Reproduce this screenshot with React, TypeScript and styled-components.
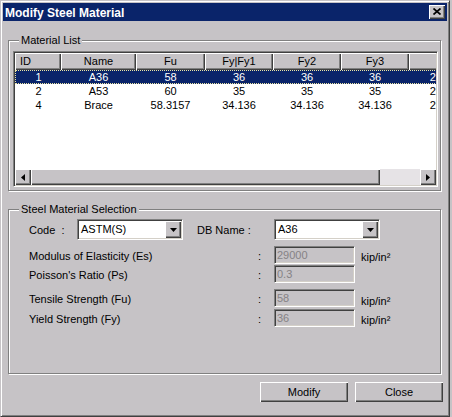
import React from 'react';
import styled, { createGlobalStyle } from 'styled-components';

const BG = '#c6c3c6';
const NAVY = '#0a246a';
const FONT = '"Liberation Sans", Arial, sans-serif';

const GlobalStyle = createGlobalStyle`
  html, body { margin: 0; padding: 0; background: ${BG}; }
  body { font-family: ${FONT}; font-size: 11px; color: #000; }
  * { box-sizing: border-box; }
`;

const Window = styled.div`
  width: 450px;
  height: 417px;
  background: ${BG};
  border: 1px solid;
  border-color: ${BG} #404040 #404040 ${BG};
  box-shadow: inset 1px 1px #fff, inset -1px -1px #808080;
  padding: 2px;
  display: flex;
  flex-direction: column;
`;

const TitleBar = styled.div`
  height: 18px;
  background: ${NAVY};
  color: #fff;
  display: flex;
  align-items: center;
  justify-content: space-between;
  padding: 0 2px 0 2px;
  font-weight: bold;
  font-size: 12px;
`;

const TitleText = styled.span`
  line-height: 18px;
  padding-top: 1px;
`;

const raised = `
  background: ${BG};
  box-shadow: inset 1px 1px #fff, inset -1px -1px #404040, inset -2px -2px #808080;
`;

const sunkenBorder = `
  border: 1px solid;
  border-color: #808080 #fff #fff #808080;
  box-shadow: inset 1px 1px #404040, inset -1px -1px #d4d0c8;
  padding: 1px;
`;

const CloseBox = styled.div`
  ${raised}
  width: 16px;
  height: 14px;
  display: flex;
  align-items: center;
  justify-content: center;
  padding-bottom: 1px;
`;

const Body = styled.div`
  flex: 1;
  display: flex;
  flex-direction: column;
  padding: 19px 6px 0 5px;
`;

const Group = styled.div<{ $height: number; $mt?: number }>`
  position: relative;
  height: ${p => p.$height}px;
  margin-top: ${p => p.$mt ?? 0}px;
  border: 1px solid #808080;
  box-shadow: inset 1px 1px #fff, 1px 1px #fff;
`;

const Legend = styled.span`
  position: absolute;
  top: -7px;
  left: 10px;
  padding: 0 2px;
  background: ${BG};
  line-height: 13px;
`;

const ListGroupInner = styled.div`
  padding: 10px 2px 3px 4px;
`;

const ListView = styled.div`
  ${sunkenBorder}
  height: 136px;
  background: #fff;
  display: flex;
  flex-direction: column;
`;

const Viewport = styled.div`
  flex: 1;
  overflow: hidden;
`;

const Table = styled.div`
  width: 470px;
`;

const HeaderRow = styled.div`
  display: flex;
  height: 17px;
`;

const HeaderCell = styled.div<{ $width: number; $align: string }>`
  ${raised}
  width: ${p => p.$width}px;
  flex: none;
  line-height: 16px;
  text-align: ${p => p.$align};
  padding-left: ${p => (p.$align === 'left' ? 5 : 0)}px;
  white-space: nowrap;
  overflow: hidden;
`;

const Row = styled.div<{ $selected?: boolean }>`
  display: flex;
  height: 14px;
  border: 1px ${p => (p.$selected ? 'dotted #ece6a4' : 'solid transparent')};
  background: ${p => (p.$selected ? NAVY : 'transparent')};
  color: ${p => (p.$selected ? '#fff' : '#000')};
`;

const Cell = styled.div<{ $width: number; $first?: boolean }>`
  width: ${p => p.$width - (p.$first ? 1 : 0)}px;
  flex: none;
  line-height: 13px;
  text-align: center;
  white-space: nowrap;
  overflow: hidden;
`;

const HScroll = styled.div`
  display: flex;
  height: 16px;
  flex: none;
`;

const ScrollButton = styled.div`
  ${raised}
  width: 16px;
  height: 16px;
  flex: none;
  display: flex;
  align-items: center;
  justify-content: center;
`;

const Thumb = styled.div<{ $width: number }>`
  ${raised}
  width: ${p => p.$width}px;
  flex: none;
`;

const Track = styled.div`
  flex: 1;
  background: #e6e3e6;
`;

const SelGroupInner = styled.div`
  padding: 9px 0 0 20px;
  display: flex;
  flex-direction: column;
`;

const CodeRow = styled.div`
  display: flex;
  align-items: center;
  height: 21px;
`;

const FieldLabel = styled.div<{ $width: number; $ml?: number }>`
  width: ${p => p.$width}px;
  margin-left: ${p => p.$ml ?? 0}px;
  flex: none;
  white-space: pre;
  padding-top: 1px;
`;

const Combo = styled.div`
  ${sunkenBorder}
  width: 106px;
  height: 21px;
  background: #fff;
  display: flex;
  flex: none;
`;

const ComboText = styled.div`
  flex: 1;
  padding-left: 2px;
  line-height: 17px;
`;

const ComboButton = styled.div`
  ${raised}
  width: 16px;
  height: 17px;
  display: flex;
  align-items: center;
  justify-content: center;
`;

const PropRow = styled.div<{ $mt: number }>`
  display: flex;
  align-items: center;
  height: 18px;
  margin-top: ${p => p.$mt}px;
`;

const PropLabel = styled.div`
  width: 229px;
  flex: none;
  padding-top: 2px;
`;

const Colon = styled.div`
  width: 16px;
  flex: none;
  padding-top: 2px;
`;

const ValueInput = styled.input`
  ${sunkenBorder}
  width: 81px;
  height: 18px;
  flex: none;
  margin: 0;
  padding: 1px 2px;
  background: ${BG};
  color: #858285;
  font-family: ${FONT};
  font-size: 11px;
  outline: none;
`;

const Unit = styled.div<{ $dy: number }>`
  margin-left: 6px;
  padding-top: ${p => p.$dy}px;
`;

const ButtonRow = styled.div`
  display: flex;
  justify-content: flex-end;
  gap: 7px;
  margin: 8px -2px 0 0;
`;

const PushButton = styled.button`
  ${raised}
  border: none;
  width: 88px;
  height: 20px;
  margin: 0;
  padding: 0;
  font-family: ${FONT};
  font-size: 11px;
  color: #000;
`;

const Arrow = ({ dir }: { dir: 'left' | 'right' | 'down' }) => {
  if (dir === 'down') {
    return (
      <svg width="7" height="4" viewBox="0 0 7 4">
        <path d="M0 0H7L3.5 4Z" fill="#000" />
      </svg>
    );
  }
  return (
    <svg width="4" height="7" viewBox="0 0 4 7">
      <path d={dir === 'left' ? 'M4 0V7L0 3.5Z' : 'M0 0V7L4 3.5Z'} fill="#000" />
    </svg>
  );
};

const columns = [
  { key: 'id', title: 'ID', width: 46, align: 'left' },
  { key: 'name', title: 'Name', width: 75, align: 'center' },
  { key: 'fu', title: 'Fu', width: 69, align: 'center' },
  { key: 'fy1', title: 'Fy|Fy1', width: 68, align: 'center' },
  { key: 'fy2', title: 'Fy2', width: 68, align: 'center' },
  { key: 'fy3', title: 'Fy3', width: 68, align: 'center' },
  { key: 'es', title: 'Es', width: 72, align: 'center' },
];

type Mat = Record<string, string>;

const rows: Mat[] = [
  { id: '1', name: 'A36', fu: '58', fy1: '36', fy2: '36', fy3: '36', es: '29000' },
  { id: '2', name: 'A53', fu: '60', fy1: '35', fy2: '35', fy3: '35', es: '29000' },
  { id: '4', name: 'Brace', fu: '58.3157', fy1: '34.136', fy2: '34.136', fy3: '34.136', es: '29000' },
];

const props = [
  { label: 'Modulus of Elasticity (Es)', value: '29000', unit: true, mt: 6, dy: 3 },
  { label: "Poisson's Ratio (Ps)", value: '0.3', unit: false, mt: 1, dy: 0 },
  { label: 'Tensile Strength (Fu)', value: '58', unit: true, mt: 6, dy: 6 },
  { label: 'Yield Strength (Fy)', value: '36', unit: true, mt: 2, dy: 3 },
];

export default function App() {
  return (
    <>
      <GlobalStyle />
      <Window>
        <TitleBar>
          <TitleText>Modify Steel Material</TitleText>
          <CloseBox>
            <svg width="8" height="7" viewBox="0 0 8 7">
              <path d="M0.5 0.5L7.5 6.5M7.5 0.5L0.5 6.5" stroke="#000" strokeWidth="1.7" />
            </svg>
          </CloseBox>
        </TitleBar>
        <Body>
          <Group $height={151}>
            <Legend>Material List</Legend>
            <ListGroupInner>
              <ListView>
                <Viewport>
                  <Table>
                    <HeaderRow>
                      {columns.map(c => (
                        <HeaderCell key={c.key} $width={c.width} $align={c.align}>
                          {c.title}
                        </HeaderCell>
                      ))}
                    </HeaderRow>
                    {rows.map((r, i) => (
                      <Row key={r.id} $selected={i === 0}>
                        {columns.map((c, j) => (
                          <Cell key={c.key} $width={c.width} $first={j === 0}>
                            {r[c.key]}
                          </Cell>
                        ))}
                      </Row>
                    ))}
                  </Table>
                </Viewport>
                <HScroll>
                  <ScrollButton>
                    <Arrow dir="left" />
                  </ScrollButton>
                  <Thumb $width={349} />
                  <Track />
                  <ScrollButton>
                    <Arrow dir="right" />
                  </ScrollButton>
                </HScroll>
              </ListView>
            </ListGroupInner>
          </Group>

          <Group $height={165} $mt={18}>
            <Legend>Steel Material Selection</Legend>
            <SelGroupInner>
              <CodeRow>
                <FieldLabel $width={48}>{'Code  :'}</FieldLabel>
                <Combo>
                  <ComboText>ASTM(S)</ComboText>
                  <ComboButton>
                    <Arrow dir="down" />
                  </ComboButton>
                </Combo>
                <FieldLabel $width={77} $ml={14}>DB Name :</FieldLabel>
                <Combo>
                  <ComboText>A36</ComboText>
                  <ComboButton>
                    <Arrow dir="down" />
                  </ComboButton>
                </Combo>
              </CodeRow>
              {props.map(p => (
                <PropRow key={p.label} $mt={p.mt}>
                  <PropLabel>{p.label}</PropLabel>
                  <Colon>:</Colon>
                  <ValueInput disabled readOnly value={p.value} />
                  {p.unit && <Unit $dy={p.dy}>kip/in²</Unit>}
                </PropRow>
              ))}
            </SelGroupInner>
          </Group>

          <ButtonRow>
            <PushButton>Modify</PushButton>
            <PushButton>Close</PushButton>
          </ButtonRow>
        </Body>
      </Window>
    </>
  );
}
